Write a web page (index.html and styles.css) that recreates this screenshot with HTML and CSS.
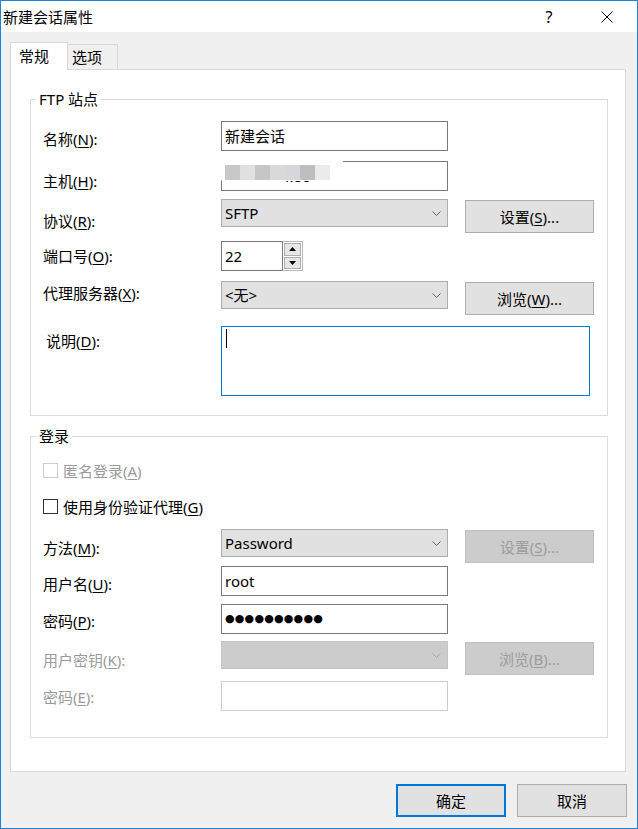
FILE: index.html
```html
<!DOCTYPE html>
<html lang="zh-CN">
<head>
<meta charset="utf-8">
<title>新建会话属性</title>
<link rel="stylesheet" href="styles.css">
</head>
<body>
<div class="window">
  <div class="titlebar">
    <div class="title">新建会话属性</div>
    <div class="tb-btn help">?</div>
    <div class="tb-btn close"><svg width="12" height="12" viewBox="0 0 12 12"><path d="M0.5 0.5 L11.5 11.5 M11.5 0.5 L0.5 11.5" stroke="#000" stroke-width="1" fill="none"/></svg></div>
  </div>
  <div class="body">
    <div class="tabs">
      <div class="tab active">常规</div>
      <div class="tab">选项</div>
    </div>
    <div class="panel">
      <div class="group g1">
        <div class="legend">FTP 站点</div>
        <div class="row r-name">
          <div class="lab">名称(<u>N</u>):</div>
          <div class="field">新建会话</div>
        </div>
        <div class="row r-host">
          <div class="lab">主机(<u>H</u>):</div>
          <div class="field host">
            <span class="host-text">4.80</span>
            <div class="blur">
              <span class="px p1"></span><span class="px p2"></span><span class="px p3"></span><span class="px p4"></span><span class="px p5"></span><span class="px p6"></span><span class="px p7"></span>
            </div>
          </div>
        </div>
        <div class="row r-proto">
          <div class="lab">协议(<u>R</u>):</div>
          <div class="select"><span>SFTP</span><svg class="chev" width="9" height="5" viewBox="0 0 9 5"><path d="M0.5 0.5 L4.5 4.5 L8.5 0.5" stroke="#606060" stroke-width="1" fill="none"/></svg></div>
          <div class="btn">设置(<u>S</u>)...</div>
        </div>
        <div class="row r-port">
          <div class="lab">端口号(<u>O</u>):</div>
          <div class="spin">
            <div class="spin-text">22</div>
            <div class="spin-btns">
              <div class="sb"><svg width="7" height="4" viewBox="0 0 7 4"><path d="M0 4 L3.5 0 L7 4 Z" fill="#000"/></svg></div>
              <div class="sb"><svg width="7" height="4" viewBox="0 0 7 4"><path d="M0 0 L7 0 L3.5 4 Z" fill="#000"/></svg></div>
            </div>
          </div>
        </div>
        <div class="row r-proxy">
          <div class="lab">代理服务器(<u>X</u>):</div>
          <div class="select"><span>&lt;无&gt;</span><svg class="chev" width="9" height="5" viewBox="0 0 9 5"><path d="M0.5 0.5 L4.5 4.5 L8.5 0.5" stroke="#606060" stroke-width="1" fill="none"/></svg></div>
          <div class="btn">浏览(<u>W</u>)...</div>
        </div>
        <div class="row r-desc">
          <div class="lab">说明(<u>D</u>):</div>
          <div class="memo"><span class="caret"></span></div>
        </div>
      </div>

      <div class="group g2">
        <div class="legend">登录</div>
        <div class="crow c-anon dis">
          <span class="cb dis"></span><span>匿名登录(<u>A</u>)</span>
        </div>
        <div class="crow c-agent">
          <span class="cb"></span><span>使用身份验证代理(<u>G</u>)</span>
        </div>
        <div class="row r-method">
          <div class="lab">方法(<u>M</u>):</div>
          <div class="select"><span>Password</span><svg class="chev" width="9" height="5" viewBox="0 0 9 5"><path d="M0.5 0.5 L4.5 4.5 L8.5 0.5" stroke="#606060" stroke-width="1" fill="none"/></svg></div>
          <div class="btn dis">设置(<u>S</u>)...</div>
        </div>
        <div class="row r-user">
          <div class="lab">用户名(<u>U</u>):</div>
          <div class="field">root</div>
        </div>
        <div class="row r-pass">
          <div class="lab">密码(<u>P</u>):</div>
          <div class="field"><span class="dots">●●●●●●●●●●</span></div>
        </div>
        <div class="row r-key">
          <div class="lab dis">用户密钥(<u>K</u>):</div>
          <div class="select dis"><span></span><svg class="chev" width="9" height="5" viewBox="0 0 9 5"><path d="M0.5 0.5 L4.5 4.5 L8.5 0.5" stroke="#a8a8a8" stroke-width="1" fill="none"/></svg></div>
          <div class="btn dis">浏览(<u>B</u>)...</div>
        </div>
        <div class="row r-pass2">
          <div class="lab dis">密码(<u>E</u>):</div>
          <div class="field dis"></div>
        </div>
      </div>
    </div>
    <div class="footer">
      <div class="fbtn default">确定</div>
      <div class="fbtn">取消</div>
    </div>
  </div>
</div>
</body>
</html>
```
FILE: styles.css
```css
* { box-sizing: border-box; }
html, body { margin: 0; padding: 0; }
body {
  font-family: "Noto Sans", "Noto Sans CJK SC", sans-serif;
  font-size: 15px;
  line-height: 20px;
  color: #000;
  background: #fff;
}
u { text-underline-offset: 2px; text-decoration-thickness: 1px; }

.window {
  width: 638px;
  height: 829px;
  border: 1px solid #1883d7;
  background: #f0f0f0;
  display: flex;
  flex-direction: column;
}

.titlebar {
  height: 31px;
  flex: none;
  background: #fff;
  display: flex;
  align-items: center;
}
.title { flex: 1; padding-left: 2px; white-space: nowrap; }
.tb-btn {
  width: 58px;
  height: 31px;
  display: flex;
  align-items: center;
  justify-content: center;
}
.help { font-size: 16px; }
.close { margin-right: 1px; }

.body { flex: 1; display: flex; flex-direction: column; }

.tabs {
  display: flex;
  align-items: flex-end;
  height: 27px;
  margin: 10px 0 0 9px;
  flex: none;
}
.tab {
  width: 50px;
  height: 25px;
  border: 1px solid #d9d9d9;
  border-left: none;
  border-bottom: none;
  background: #f0f0f0;
  padding: 2px 0 0 4px;
  white-space: nowrap;
}
.tab.active {
  width: 58px;
  height: 28px;
  margin-bottom: -1px;
  border-left: 1px solid #d9d9d9;
  background: #fff;
  padding: 3px 0 0 8px;
  position: relative;
  z-index: 1;
}

.panel {
  flex: none;
  height: 703px;
  margin: 0 11px 0 9px;
  border: 1px solid #d9d9d9;
  background: #fff;
}

.group {
  border: 1px solid #dcdcdc;
  margin: 29px 17px 0 19px;
  padding: 0 0 19px 12px;
}
.g2 { margin-top: 20px; padding-bottom: 26px; }
.legend {
  display: block;
  width: max-content;
  margin: -11px 0 0 -7px;
  padding: 0 3px;
  background: #fff;
  white-space: nowrap;
}

.row { display: flex; align-items: flex-start; }
.lab { width: 178px; flex: none; white-space: nowrap; }

.field {
  width: 227px;
  height: 30px;
  flex: none;
  border: 1px solid #7a7a7a;
  background: #fff;
  padding: 0 3px;
  display: flex;
  align-items: center;
  white-space: nowrap;
}
.field.dis { border-color: #cccccc; }

.select {
  width: 227px;
  height: 28px;
  flex: none;
  border: 1px solid #adadad;
  background: #e1e1e1;
  padding: 0 6px 0 3px;
  display: flex;
  align-items: center;
  justify-content: space-between;
  white-space: nowrap;
}
.select.dis { background: #cccccc; border-color: #c4c4c4; }
.chev { display: block; }

.btn {
  width: 129px;
  height: 33px;
  flex: none;
  margin: 1px 0 0 17px;
  border: 1px solid #adadad;
  background: #e1e1e1;
  display: flex;
  align-items: center;
  justify-content: center;
  white-space: nowrap;
}
.btn.dis { background: #cccccc; border-color: #bfbfbf; color: #9c9c9c; }
.dis { color: #9a9a9a; }

/* host field with privacy blur */
.field.host { position: relative; padding-left: 59px; }
.blur {
  position: absolute;
  left: -8px;
  top: -4px;
  width: 129px;
  height: 23px;
  background: #fff;
  border-radius: 11px 4px 4px 11px;
  display: flex;
  padding: 7px 0 0 11px;
}
.px { width: 15px; height: 15px; flex: none; }
.p1 { background: #c8c8c8; }
.p2 { background: #e0e0e0; }
.p3 { background: #c6c6c6; }
.p4 { background: #d9d9d9; }
.p5 { background: #d5d7dc; }
.p6 { background: #bebebe; }
.p7 { background: #ebebeb; }

/* spinner */
.spin { display: flex; height: 30px; flex: none; }
.spin-text {
  width: 62px;
  height: 30px;
  border: 1px solid #7a7a7a;
  background: #fff;
  padding: 0 3px;
  display: flex;
  align-items: center;
}
.spin-btns {
  width: 20px;
  height: 30px;
  border: 1px solid #bcbcbc;
  border-left: none;
  padding: 1px;
  display: flex;
  flex-direction: column;
  gap: 1px;
  background: #fff;
}
.sb {
  flex: 1;
  background: #e6e6e6;
  border: 1px solid #adadad;
  display: flex;
  align-items: center;
  justify-content: center;
}
.sb svg { display: block; }

/* memo */
.memo {
  width: 369px;
  height: 70px;
  flex: none;
  border: 1px solid #0078d7;
  padding: 2px 4px;
}
.caret { display: block; width: 1px; height: 19px; background: #000; }

/* checkboxes */
.crow { display: flex; align-items: flex-start; height: 20px; white-space: nowrap; }
.cb {
  width: 15px;
  height: 15px;
  flex: none;
  margin: 2px 5px 0 0;
  border: 1px solid #333;
  background: #fff;
}
.cb.dis { border-color: #cccccc; }

.dots {
  font-family: "DejaVu Sans", sans-serif;
  font-size: 11px;
  letter-spacing: 0.2px;
}

/* row spacing (group 1) */
.r-name { margin-top: 12px; }
.r-name .lab { padding-top: 8px; }
.r-host { margin-top: 10px; }
.r-host .lab { padding-top: 10px; }
.r-proto { margin-top: 8px; }
.r-proto .lab { padding-top: 12px; }
.r-port { margin-top: 8px; }
.r-port .lab { padding-top: 5px; }
.r-proxy { margin-top: 10px; }
.r-proxy .lab { padding-top: 2px; }
.r-desc { margin-top: 11px; }
.r-desc .lab { padding: 5px 0 0 3px; }

/* row spacing (group 2) */
.c-anon { margin-top: 15px; }
.c-agent { margin-top: 16px; }
.r-method { margin-top: 12px; }
.r-method .lab { padding-top: 9px; }
.r-user { margin-top: 3px; }
.r-user .lab { padding-top: 8px; }
.r-pass { margin-top: 8px; }
.r-pass .lab { padding-top: 7px; }
.r-key { margin-top: 7px; }
.r-key .lab { padding-top: 9px; }
.r-pass2 { margin-top: 6px; }
.r-pass2 .lab { padding-top: 6px; }

.footer {
  flex: none;
  display: flex;
  justify-content: flex-end;
  gap: 11px;
  margin: 12px 10px 0 0;
}
.fbtn {
  width: 110px;
  height: 33px;
  border: 1px solid #adadad;
  background: #e1e1e1;
  display: flex;
  align-items: center;
  justify-content: center;
}
.fbtn.default { border: 2px solid #0078d7; }
```
